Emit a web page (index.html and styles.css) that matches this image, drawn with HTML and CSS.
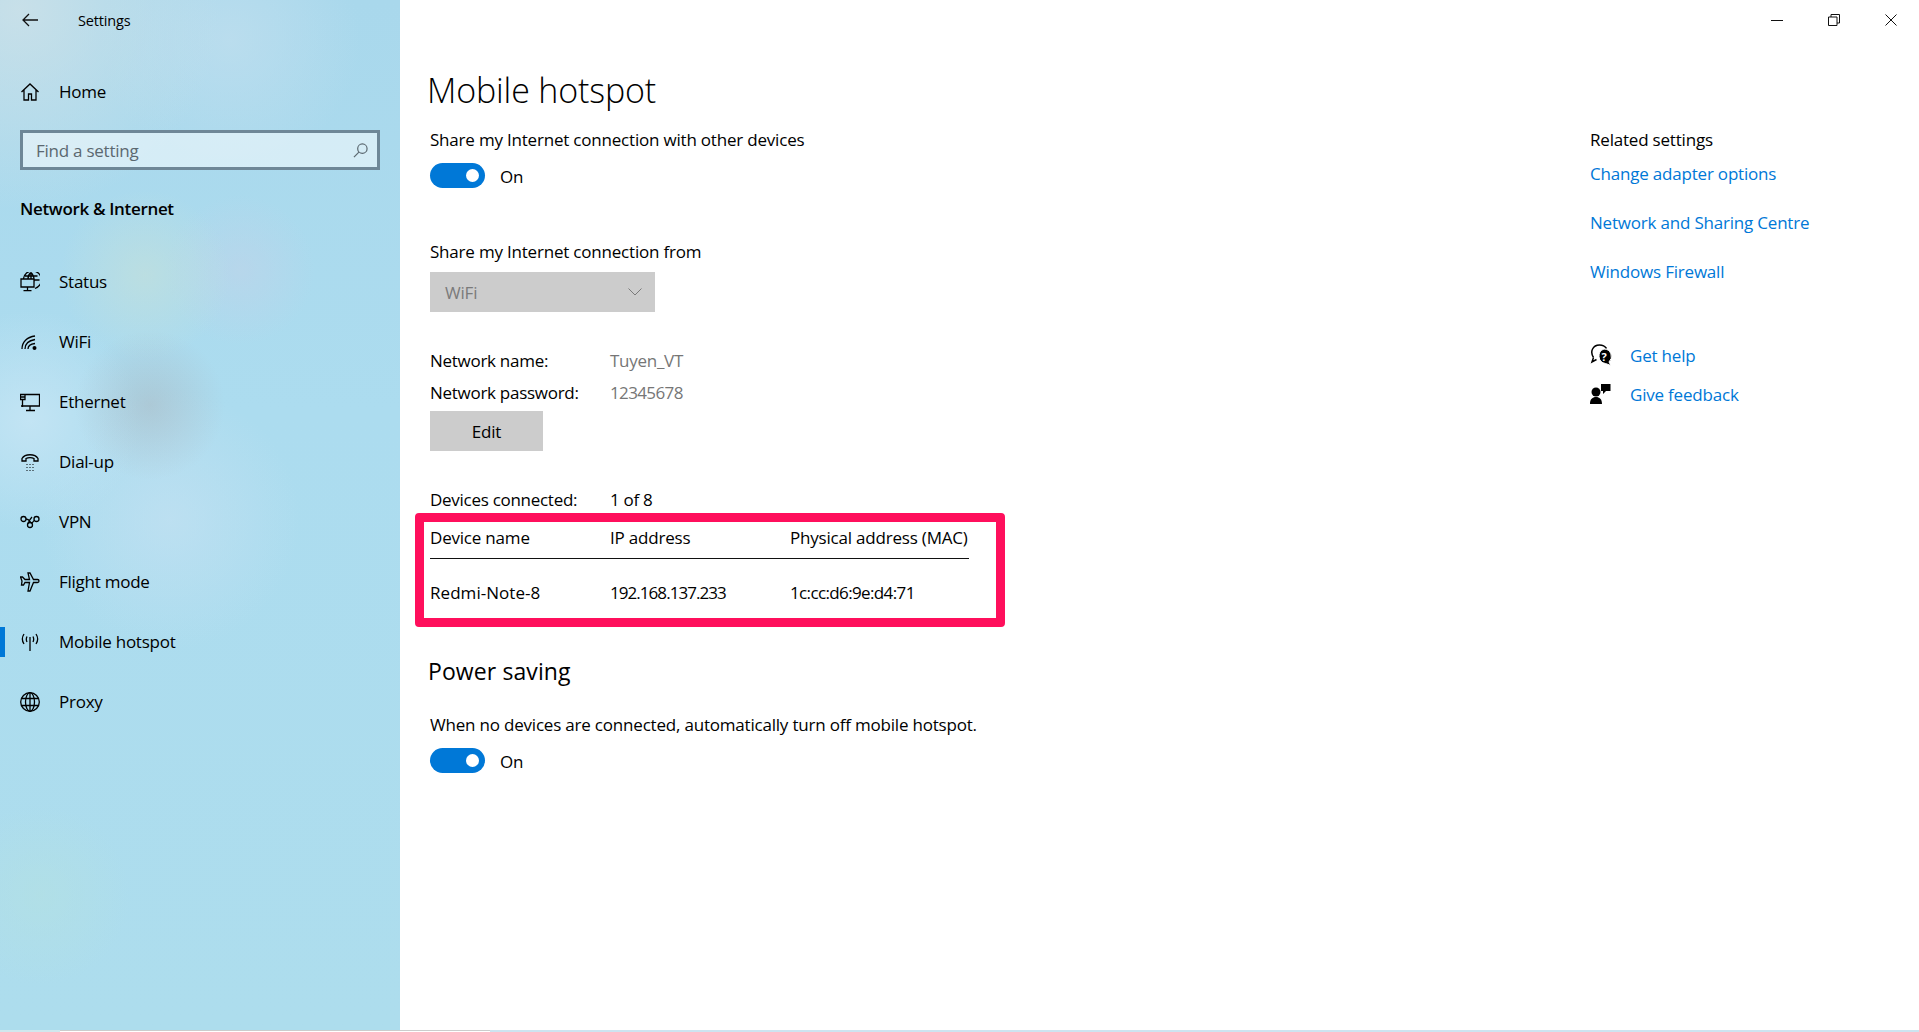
FILE: index.html
```html
<!DOCTYPE html>
<html lang="en">
<head>
<meta charset="utf-8">
<title>Settings</title>
<link rel="stylesheet" href="styles.css">
</head>
<body>
<div class="app">
  <aside class="sidebar">
    <div class="side-head">
      <svg class="back" viewBox="0 0 16 14"><path d="M7 1 1 7l6 6M1 7h15"/></svg>
      <span class="side-title">Settings</span>
    </div>
    <div class="nav-row home">
      <svg class="ico" viewBox="0 0 20 20"><path d="M1.500 10 10 2l8.500 8M4 8v10h4.500v-6h3v6H16V8"/></svg>
      <span>Home</span>
    </div>
    <div class="search">
      <span>Find a setting</span>
      <svg class="search-ico" viewBox="0 0 16 16"><circle cx="10" cy="6" r="5"/><path d="M6.300 9.700 1 15"/></svg>
    </div>
    <div class="section">Network &amp; Internet</div>
    <nav class="nav">
      <div class="nav-row">
        <svg class="ico" viewBox="0 0 20 20"><path d="M3.500 6.500A9 9 0 1 1 15 16.500M11 .5C9 2 8 4.500 8 6.500M11 .5v6.500M11 .5c2.500 2.500 3.500 6 3 10M5 4h12.500M14 8h5.500M1 7h13v8H1zM7.500 15v3.500M3.500 18.700h8"/></svg>
        <span>Status</span>
      </div>
      <div class="nav-row">
        <svg class="ico" viewBox="0 0 20 20"><path d="M2 17C2 10 7 5 15 4M5 17c0-5 4-8.500 10-9.500M8 17c0-3 3-5 7-5.500"/><circle cx="14.500" cy="16" r="2" class="solid"/></svg>
        <span>WiFi</span>
      </div>
      <div class="nav-row">
        <svg class="ico" viewBox="0 0 20 20"><path d="M5 2.500h14.500V14H1M5 7.500H.5V2.500H5zM2.500 7.500V15M.5 5H5M10 14v4M6 18.500h9"/></svg>
        <span>Ethernet</span>
      </div>
      <div class="nav-row">
        <svg class="ico" viewBox="0 0 20 20"><path d="M2 9V6.500C5 1.500 15 1.500 18 6.500V9h-4V6.500c-2-1-6-1-8 0V9z"/><path class="dots" d="M7 12v1M10 12v1M13 12v1M7 15v1M10 15v1M13 15v1M7 18v1M10 18v1M13 18v1"/></svg>
        <span>Dial-up</span>
      </div>
      <div class="nav-row">
        <svg class="ico" viewBox="0 0 20 20"><circle cx="3.500" cy="7" r="2.500"/><circle cx="16.500" cy="7" r="2.500"/><circle cx="10" cy="13" r="2.500"/><path d="M6 7c2 0 3 1 4 2.500s2 2.500 4-1M8 11.500C9 9 10 7 12 5"/></svg>
        <span>VPN</span>
      </div>
      <div class="nav-row">
        <svg class="ico" viewBox="0 0 20 20"><path d="M8 1h2l3.500 6.500h4c2 0 2 3 0 3h-4L10 19H8l1.500-8.500H5L3.500 13H1.500l.5-4-1.500-4h2L5 7.500h4.500z"/></svg>
        <span>Flight mode</span>
      </div>
      <div class="nav-row active">
        <svg class="ico" viewBox="0 0 20 20"><path d="M10 5v14M4 2c-2 3-2 7 0 10M16 2c2 3 2 7 0 10M7 4.500c-1 2-1 3.500 0 5.500M13 4.500c1 2 1 3.500 0 5.500"/></svg>
        <span>Mobile hotspot</span>
      </div>
      <div class="nav-row">
        <svg class="ico" viewBox="0 0 20 20"><circle cx="10" cy="10" r="9.300"/><ellipse cx="10" cy="10" rx="4.500" ry="9.300"/><path d="M10 .7v18.600M1.500 6.500h17M1.500 13.500h17"/></svg>
        <span>Proxy</span>
      </div>
    </nav>
  </aside>

  <main class="main">
    <div class="win-controls">
      <svg class="win" viewBox="0 0 12 12"><path d="M0 6.500h12"/></svg>
      <svg class="win" viewBox="0 0 12 12"><path d="M.5 3h8.500v8.500H.5zM3 3V.5h8.500V9H9"/></svg>
      <svg class="win" viewBox="0 0 12 12"><path d="M.5.5l11 11M11.500.5l-11 11"/></svg>
    </div>
    <div class="columns">
      <section class="content">
        <h1 class="title">Mobile hotspot</h1>
        <p class="line gap-title">Share my Internet connection with other devices</p>
        <div class="toggle-row">
          <span class="toggle"></span>
          <span class="toggle-label">On</span>
        </div>
        <p class="line gap-section">Share my Internet connection from</p>
        <div class="dropdown">
          <span>WiFi</span>
          <svg class="chevron" viewBox="0 0 14 8"><path d="M.5.5 7 7l6.500-6.500"/></svg>
        </div>
        <div class="kv gap-kv"><span>Network name:</span><span class="muted">Tuyen_VT</span></div>
        <div class="kv gap-small"><span>Network password:</span><span class="muted digits">12345678</span></div>
        <div class="edit">Edit</div>
        <div class="kv gap-kv"><span>Devices connected:</span><span>1 of 8</span></div>
        <div class="device-box">
          <div class="grid grid-head"><span>Device name</span><span>IP address</span><span>Physical address (MAC)</span></div>
          <div class="grid grid-row"><span class="device">Redmi-Note-8</span><span class="ip">192.168.137.233</span><span class="digits">1c:cc:d6:9e:d4:71</span></div>
        </div>
        <h2 class="subtitle">Power saving</h2>
        <p class="line gap-power">When no devices are connected, automatically turn off mobile hotspot.</p>
        <div class="toggle-row">
          <span class="toggle"></span>
          <span class="toggle-label">On</span>
        </div>
      </section>
      <aside class="related">
        <p class="line">Related settings</p>
        <a class="link first">Change adapter options</a>
        <a class="link">Network and Sharing Centre</a>
        <a class="link">Windows Firewall</a>
        <div class="help-list">
          <div class="help">
            <svg class="help-ico" viewBox="0 0 22 22"><path class="thin" d="M3.500 13.500 2 18l4.500-2.500M3.500 13.500C-.5 7.500 3 1 9.500 1c3 0 5.500 1.200 7 3.500"/><path class="fill halo" d="M14 5a7.500 7.500 0 0 1 5 13l2 3.500-5.500-2A7.500 7.500 0 0 1 14 5z"/><text x="14" y="16.500" class="q">?</text></svg>
            <a class="link-inline">Get help</a>
          </div>
          <div class="help">
            <svg class="help-ico" viewBox="0 0 22 22"><circle class="fill" cx="6" cy="9" r="4.500"/><path class="fill" d="M0 21c0-5 2.500-7 6-7s6 2 6 7zM11 1h9.500v7H16l-3 3V8h-2z"/></svg>
            <a class="link-inline">Give feedback</a>
          </div>
        </div>
      </aside>
    </div>
  </main>
</div>
<div class="strip">
  <span class="strip-a"></span>
  <span class="strip-b"></span>
  <span class="strip-c"></span>
</div>
</body>
</html>
```

FILE: styles.css
```css
* { box-sizing: border-box; }
html, body { margin: 0; padding: 0; height: 100%; overflow: hidden; }
body {
  display: flex;
  flex-direction: column;
  background: #fff;
  color: #000;
  font-family: "Open Sans", "Noto Sans", sans-serif;
  font-size: 17px;
  line-height: 24px;
  letter-spacing: -0.2px;
}
p, h1, h2 { margin: 0; font-weight: 400; }
svg { fill: none; stroke: currentColor; stroke-width: 1.3; display: block; }

.app { flex: 1; display: flex; min-height: 0; }

/* Sidebar */
.sidebar {
  width: 400px;
  flex: none;
  background:
    radial-gradient(circle 75px at 150px 405px, rgba(170,170,175,.38), rgba(170,170,175,0)),
    radial-gradient(circle 85px at 145px 275px, rgba(200,225,215,.55), rgba(200,225,215,0)),
    radial-gradient(circle 75px at 240px 270px, rgba(195,210,232,.5), rgba(195,210,232,0)),
    radial-gradient(circle 110px at 30px 420px, rgba(200,230,245,.8), rgba(200,230,245,0)),
    radial-gradient(circle 130px at 170px 520px, rgba(195,225,242,.7), rgba(195,225,242,0)),
    radial-gradient(circle 90px at 40px 895px, rgba(180,225,225,.55), rgba(180,225,225,0)),
    radial-gradient(circle 200px at 20px 10px, rgba(205,225,232,.85), rgba(205,225,232,0)),
    radial-gradient(circle 130px at 230px 40px, rgba(190,222,238,.8), rgba(190,222,238,0)),
    linear-gradient(#a9d8ec, #acdcef 40%, #addded);
  display: flex;
  flex-direction: column;
  letter-spacing: -0.25px;
}
.side-head { height: 40px; display: flex; align-items: center; padding-left: 22px; }
.back { width: 16px; height: 14px; color: #111; }
.side-title { margin-left: 40px; padding-top: 2px; font-size: 14.500px; letter-spacing: -0.15px; }
.nav-row {
  position: relative;
  height: 60px;
  display: flex;
  align-items: center;
  padding-left: 20px;
  gap: 19px;
}
.home { margin-top: 22px; }
.ico { width: 20px; height: 20px; flex: none; }
.solid { fill: currentColor; stroke: none; }
.dots { stroke-width: 1; }
.search {
  margin: 8px 20px 0;
  height: 40px;
  border: 3px solid #6e8797;
  background: rgba(255,255,255,.5);
  color: #5b6870;
  display: flex;
  align-items: center;
  justify-content: space-between;
  padding: 0 9px 0 13px;
}
.search span { padding-top: 2px; }
.search-ico { width: 15px; height: 15px; }
.section { margin: 27px 0 0 20px; font-weight: 600; letter-spacing: -0.33px; }
.nav { margin-top: 31px; }
.active::before {
  content: "";
  position: absolute;
  left: 0;
  top: 15px;
  width: 5px;
  height: 30px;
  background: #0078d7;
}

/* Main */
.main { flex: 1; min-width: 0; display: flex; flex-direction: column; }
.win-controls { height: 40px; display: flex; justify-content: flex-end; align-items: center; padding-right: 22px; gap: 45px; }
.win { width: 12px; height: 12px; color: #111; stroke-width: 1; }
.columns { display: flex; padding-left: 30px; }
.content { width: 1160px; flex: none; }
.title { margin-top: 27px; margin-left: -3px; font-size: 34px; font-weight: 300; line-height: 46px; letter-spacing: -0.15px; color: #000; }
.gap-title { margin-top: 15px; }
.gap-section { margin-top: 52px; }
.gap-kv { margin-top: 37px; }
.gap-small { margin-top: 8px; }
.gap-power { margin-top: 26px; }
.toggle-row { margin-top: 11px; height: 25px; display: flex; align-items: center; gap: 15px; }
.toggle-label { padding-top: 2px; }
.toggle { position: relative; width: 55px; height: 25px; border-radius: 13px; background: #0078d7; }
.toggle::after {
  content: "";
  position: absolute;
  right: 6px;
  top: 6px;
  width: 13px;
  height: 13px;
  border-radius: 50%;
  background: #fff;
}
.dropdown {
  margin-top: 8px;
  width: 225px;
  height: 40px;
  background: #ccc;
  color: #7a7a7a;
  display: flex;
  align-items: center;
  justify-content: space-between;
  padding: 0 13px 0 15px;
}
.dropdown span { padding-top: 1px; }
.chevron { width: 14px; height: 8px; stroke-width: 1; }
.kv { display: grid; grid-template-columns: 180px auto; letter-spacing: -0.28px; }
.muted { color: #767676; }
.digits { letter-spacing: -0.63px; }
.ip { letter-spacing: -0.95px; }
.device { letter-spacing: 0.05px; }
.edit {
  margin-top: 6px;
  width: 113px;
  height: 40px;
  background: #ccc;
  display: flex;
  align-items: center;
  justify-content: center;
  padding-top: 2px;
}
.device-box {
  margin: 1px 0 0 -15px;
  width: 590px;
  border: 9px solid #ff0f5c;
  border-radius: 4px;
  padding: 4px 27px 13px 6px;
}
.grid { display: grid; grid-template-columns: 180px 180px auto; }
.grid-head { padding-bottom: 8px; border-bottom: 1.500px solid #111; }
.grid-row { margin-top: 22px; }
.subtitle { margin: 28px 0 0 -2px; font-size: 23px; line-height: 32px; letter-spacing: 0.1px; }

/* Related */
.related { margin-left: 0; padding-top: 88px; }
.link { display: block; margin-top: 25px; color: #0078d7; }
.first { margin-top: 10px; }
.help-list { margin-top: 51px; }
.help { display: flex; align-items: center; height: 39px; gap: 18px; }
.help-ico { width: 22px; height: 22px; flex: none; }
.link-inline { color: #0078d7; padding-top: 2px; }
.fill { fill: #000; stroke: none; }
.halo { stroke: #fff; stroke-width: 1; }
.thin { stroke-width: 1.500; }
.q { fill: #fff; stroke: none; font-size: 11px; font-weight: 700; text-anchor: middle; }

/* Bottom strip */
.strip { height: 2px; flex: none; display: flex; }
.strip-a { width: 60px; background: #cfe8ee; }
.strip-b { width: 430px; background: #fff; border-top: 1px solid #ccc; }
.strip-c { flex: 1; background: #cde4f0; }
```
